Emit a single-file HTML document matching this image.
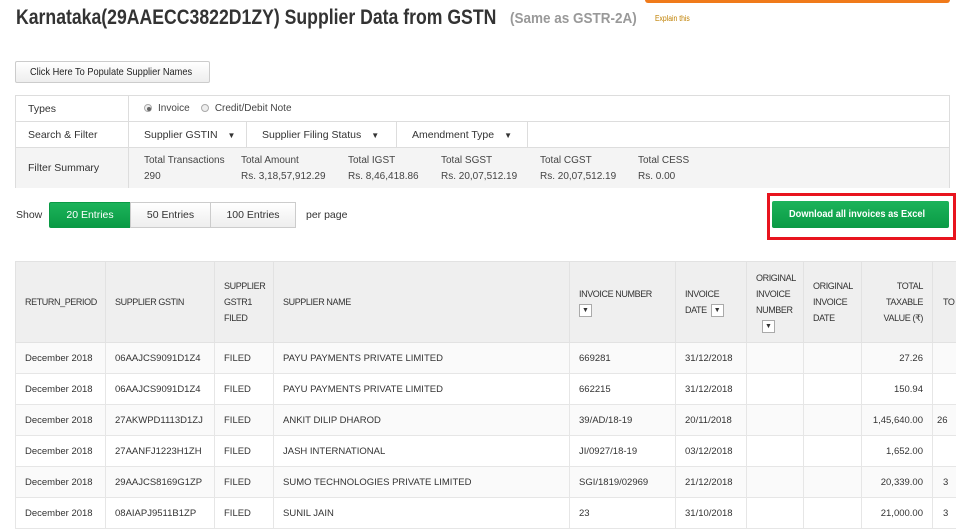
<!DOCTYPE html>
<html><head><meta charset="utf-8"><style>
*{box-sizing:border-box;margin:0;padding:0}
body{width:956px;height:532px;overflow:hidden;background:#fff;font-family:"Liberation Sans",sans-serif;color:#333;position:relative}
.abs{position:absolute}
.bar{left:645px;top:0;width:305px;height:3px;background:#f07a1a;border-radius:0 0 3px 3px}
.h1{position:absolute;left:16px;top:6px;font-size:21px;font-weight:bold;color:#333;white-space:nowrap;transform:scaleX(0.84);transform-origin:0 0}
.h1s{position:absolute;left:510px;top:10px;font-size:15px;font-weight:bold;color:#999;white-space:nowrap;transform:scaleX(0.9);transform-origin:0 0}
.exp{left:655px;top:14px;font-size:8px;color:#c08000;transform:scaleX(.85);transform-origin:0 0}
.sq{display:inline-block;transform:scaleX(.88);transform-origin:0 0;white-space:nowrap}
.btn1{left:15px;top:61px;width:195px;height:22px;border:1px solid #ccc;border-radius:2px;background:linear-gradient(#fff,#eee);font-size:10.5px;line-height:20px;color:#222;padding-left:14px}
.ft{left:15px;top:95px;width:935px;height:93px;border:1px solid #ddd}
.ft .lab{position:absolute;left:0;width:113px;border-right:1px solid #ddd;font-size:10.5px;padding-left:12px;color:#333}
.ft .rowb{position:absolute;left:0;right:0;border-top:1px solid #ddd}
.t{font-size:10px;color:#444;position:absolute}
.dd{position:absolute;top:26px;height:26px;border-right:1px solid #ddd;font-size:10.5px;line-height:26px;padding-left:15px;color:#333}
.dd b{font-size:8px;margin-left:10px}
.radio{display:inline-block;width:8px;height:8px;border:1px solid #aaa;border-radius:50%;background:#eee;vertical-align:-1px;margin-right:6px;position:relative}
.entries{top:202px;height:26px;border:1px solid #ccc;font-size:10.5px;line-height:24px;text-align:center;background:linear-gradient(#fff,#eee);color:#333}
.dl{left:772px;top:201px;width:177px;height:27px;background:linear-gradient(#1cb35a,#0a9a45);border-radius:2px;color:#fff;font-size:10.5px;line-height:27px;font-weight:bold;padding-left:17px}
.red{left:767px;top:193px;width:189px;height:47px;border:3px solid #e8141e}
table{position:absolute;left:15px;top:261px;border-collapse:collapse;table-layout:fixed;width:960px}
th{background:#efefef;height:81px;font-weight:normal;font-size:9px;text-align:left;padding-left:9px;line-height:16px;border:1px solid #e2e2e2;color:#333;letter-spacing:-0.4px;white-space:nowrap;overflow:hidden}
td{height:31px;font-size:9.5px;padding-left:9px;border:1px solid #e6e6e6;color:#333;white-space:nowrap;overflow:hidden}
tr:nth-child(even) td{background:#fafafa}
.r{text-align:right;padding-right:9px;padding-left:0}
.sb{display:inline-block;width:13px;height:13px;border:1px solid #aaa;background:#fff;font-size:7px;text-align:center;line-height:12px;vertical-align:middle;margin-left:4px;letter-spacing:0}
</style></head><body>
<div class="abs bar"></div>
<div class="h1">Karnataka(29AAECC3822D1ZY) Supplier Data from GSTN</div>
<div class="h1s">(Same as GSTR-2A)</div>
<div class="abs exp">Explain this</div>
<div class="abs btn1"><span class="sq">Click Here To Populate Supplier Names</span></div>
<div class="abs ft">
 <div class="lab" style="top:0;height:26px;line-height:26px">Types</div>
 <div class="t" style="left:128px;top:7px"><span class="radio"><i style="position:absolute;left:2px;top:2px;width:4px;height:4px;border-radius:50%;background:#666"></i></span>Invoice &nbsp;&nbsp;&nbsp;<span class="radio"></span>Credit/Debit Note</div>
 <div class="rowb" style="top:25px"></div>
 <div class="lab" style="top:26px;height:26px;line-height:26px">Search &amp; Filter</div>
 <div class="dd" style="left:113px;width:118px">Supplier GSTIN<b>▼</b></div>
 <div class="dd" style="left:231px;width:150px">Supplier Filing Status<b>▼</b></div>
 <div class="dd" style="left:381px;width:131px">Amendment Type<b>▼</b></div>
 <div class="rowb" style="top:51px;height:41px;background:#f4f4f4"></div>
 <div class="lab" style="top:52px;height:40px;line-height:40px">Filter Summary</div>
 <div class="t" style="left:128px;top:57px;line-height:16px">Total Transactions<br>290</div>
 <div class="t" style="left:225px;top:57px;line-height:16px">Total Amount<br>Rs. 3,18,57,912.29</div>
 <div class="t" style="left:332px;top:57px;line-height:16px">Total IGST<br>Rs. 8,46,418.86</div>
 <div class="t" style="left:425px;top:57px;line-height:16px">Total SGST<br>Rs. 20,07,512.19</div>
 <div class="t" style="left:524px;top:57px;line-height:16px">Total CGST<br>Rs. 20,07,512.19</div>
 <div class="t" style="left:622px;top:57px;line-height:16px">Total CESS<br>Rs. 0.00</div>
</div>
<div class="abs" style="left:16px;top:209px;font-size:10.5px">Show</div>
<div class="abs entries" style="left:49px;width:82px;background:linear-gradient(#1cb35a,#0a9a45);color:#fff;border-color:#0a9a45;border-radius:2px 0 0 2px">20 Entries</div>
<div class="abs entries" style="left:130px;width:81px">50 Entries</div>
<div class="abs entries" style="left:210px;width:86px">100 Entries</div>
<div class="abs" style="left:306px;top:209px;font-size:10.5px">per page</div>
<div class="abs dl"><span class="sq">Download all invoices as Excel</span></div>
<div class="abs red"></div>
<table>
<colgroup><col style="width:90px"><col style="width:109px"><col style="width:59px"><col style="width:296px"><col style="width:106px"><col style="width:71px"><col style="width:57px"><col style="width:58px"><col style="width:71px"><col style="width:43px"></colgroup>
<tr><th>RETURN_PERIOD</th><th>SUPPLIER GSTIN</th><th>SUPPLIER<br>GSTR1<br>FILED</th><th>SUPPLIER NAME</th><th>INVOICE NUMBER<br><span class="sb" style="margin-left:0">▼</span></th><th>INVOICE<br>DATE<span class="sb">▼</span></th><th>ORIGINAL<br>INVOICE<br>NUMBER<br><span class="sb" style="margin-left:6px">▼</span></th><th>ORIGINAL<br>INVOICE<br>DATE</th><th class="r">TOTAL<br>TAXABLE<br>VALUE (₹)</th><th style="padding-left:10px">TO</th></tr>
<tr><td>December 2018</td><td>06AAJCS9091D1Z4</td><td>FILED</td><td>PAYU PAYMENTS PRIVATE LIMITED</td><td>669281</td><td>31/12/2018</td><td></td><td></td><td class="r">27.26</td><td></td></tr>
<tr><td>December 2018</td><td>06AAJCS9091D1Z4</td><td>FILED</td><td>PAYU PAYMENTS PRIVATE LIMITED</td><td>662215</td><td>31/12/2018</td><td></td><td></td><td class="r">150.94</td><td></td></tr>
<tr><td>December 2018</td><td>27AKWPD1113D1ZJ</td><td>FILED</td><td>ANKIT DILIP DHAROD</td><td>39/AD/18-19</td><td>20/11/2018</td><td></td><td></td><td class="r">1,45,640.00</td><td style="padding-left:4px">26</td></tr>
<tr><td>December 2018</td><td>27AANFJ1223H1ZH</td><td>FILED</td><td>JASH INTERNATIONAL</td><td>JI/0927/18-19</td><td>03/12/2018</td><td></td><td></td><td class="r">1,652.00</td><td></td></tr>
<tr><td>December 2018</td><td>29AAJCS8169G1ZP</td><td>FILED</td><td>SUMO TECHNOLOGIES PRIVATE LIMITED</td><td>SGI/1819/02969</td><td>21/12/2018</td><td></td><td></td><td class="r">20,339.00</td><td style="padding-left:10px">3</td></tr>
<tr><td>December 2018</td><td>08AIAPJ9511B1ZP</td><td>FILED</td><td>SUNIL JAIN</td><td>23</td><td>31/10/2018</td><td></td><td></td><td class="r">21,000.00</td><td style="padding-left:10px">3</td></tr>
</table>
</body></html>
